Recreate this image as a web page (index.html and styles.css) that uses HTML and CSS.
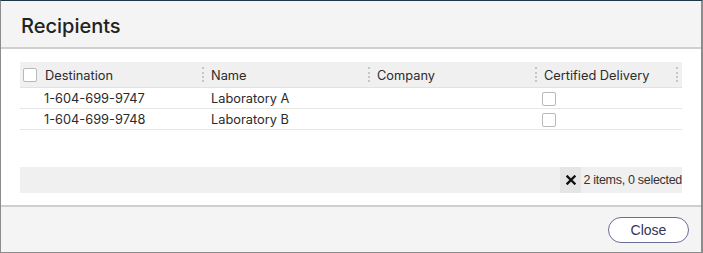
FILE: index.html
```html
<!DOCTYPE html>
<html lang="en">
<head>
    <meta charset="UTF-8">
    <meta name="viewport" content="width=device-width, initial-scale=1.0">
    <title>Recipients</title>
    <link rel="stylesheet" href="styles.css">
</head>
<body>
    <div class="dialog">
        <div class="dialog-header">
            <h1>Recipients</h1>
        </div>
        <div class="dialog-body">
            <div class="grid">
                <div class="grid-row grid-head">
                    <div class="th"><span class="label"><span class="check"></span>Destination</span><span class="grip"></span></div>
                    <div class="th"><span class="label">Name</span><span class="grip"></span></div>
                    <div class="th"><span class="label">Company</span><span class="grip"></span></div>
                    <div class="th"><span class="label">Certified Delivery</span><span class="grip"></span></div>
                    <div class="th"></div>
                </div>
                <div class="grid-row">
                    <div class="td first">1-604-699-9747</div>
                    <div class="td">Laboratory A</div>
                    <div class="td"></div>
                    <div class="td box"><span class="check"></span></div>
                    <div class="td"></div>
                </div>
                <div class="grid-row">
                    <div class="td first">1-604-699-9748</div>
                    <div class="td">Laboratory B</div>
                    <div class="td"></div>
                    <div class="td box"><span class="check"></span></div>
                    <div class="td"></div>
                </div>
            </div>
            <div class="status-bar">
                <span class="clear-btn">
                    <svg width="10" height="10" viewBox="0 0 10 10"><path d="M1.5 1.5 L8.5 8.5 M8.5 1.5 L1.5 8.5" stroke="#111" stroke-width="2.4" stroke-linecap="square"/></svg>
                </span>
                <span class="status-text">2 items, 0 selected</span>
            </div>
        </div>
        <div class="dialog-footer">
            <button class="close-btn">Close</button>
        </div>
    </div>
</body>
</html>
```

FILE: styles.css
```css
html, body {
    margin: 0;
    padding: 0;
}
body {
    font-family: Inter, "Noto Sans", sans-serif;
    color: #2b2b2b;
    background: #fff;
}
.dialog {
    width: 703px;
    height: 253px;
    box-sizing: border-box;
    border: 1px solid #8c8c8c;
    border-right: 2px solid #8c8c8c;
    border-top: 1px solid #1e3646;
    display: flex;
    flex-direction: column;
}
.dialog-header {
    height: 46px;
    background: #f4f4f4;
    border-bottom: 2px solid #cfcfcf;
    display: flex;
    align-items: center;
    padding-left: 20px;
}
.dialog-header h1 {
    margin: 0;
    font-size: 20px;
    font-weight: 500;
    color: #222;
    padding-top: 3px;
}
.dialog-body {
    flex: 1;
    padding: 13px 0 0 19px;
}
.grid {
    width: 662px;
}
.grid-row {
    display: grid;
    grid-template-columns: 184px 166px 167px 141px 4px;
    height: 20px;
    border-bottom: 1px solid #e6e6e6;
    font-size: 12.8px;
}
.grid-head {
    height: 25px;
    background: #f0f0f0;
    border-bottom: 1px solid #e2e2e2;
}
.th {
    display: flex;
    align-items: center;
    justify-content: space-between;
    padding-left: 7px;
}
.th:first-child {
    padding-left: 3px;
}
.label {
    display: flex;
    align-items: center;
    gap: 8px;
    padding-top: 1px;
}
.grip {
    width: 0;
    height: 15px;
    border-left: 2px dotted #c6c6c6;
}
.td {
    display: flex;
    align-items: center;
    padding-left: 7px;
    padding-top: 1px;
}
.td.first {
    padding-left: 24px;
}
.td.box {
    padding-left: 5px;
}
.check {
    display: inline-block;
    width: 12px;
    height: 12px;
    border: 1px solid #b9b9b9;
    border-radius: 2px;
    background: #fff;
}
.status-bar {
    margin-top: 37px;
    width: 662px;
    height: 26px;
    background: #f0f0f0;
    display: flex;
    justify-content: flex-end;
    align-items: stretch;
}
.clear-btn {
    width: 21px;
    background: #e5e5e5;
    display: flex;
    align-items: center;
    justify-content: center;
}
.status-text {
    font-family: "Liberation Sans", Arial, sans-serif;
    font-size: 12.5px;
    color: #333;
    display: flex;
    align-items: center;
    padding-left: 2px;
    letter-spacing: -0.3px;
}
.dialog-footer {
    height: 45px;
    background: #f4f4f4;
    border-top: 2px solid #cfcfcf;
    display: flex;
    justify-content: flex-end;
    align-items: center;
    padding-right: 12px;
}
.close-btn {
    width: 81px;
    height: 26px;
    border: 1px solid #6c6c98;
    border-radius: 13px;
    background: #fff;
    font-family: "Liberation Sans", Arial, sans-serif;
    font-size: 14px;
    color: #33335a;
    cursor: pointer;
}
```
